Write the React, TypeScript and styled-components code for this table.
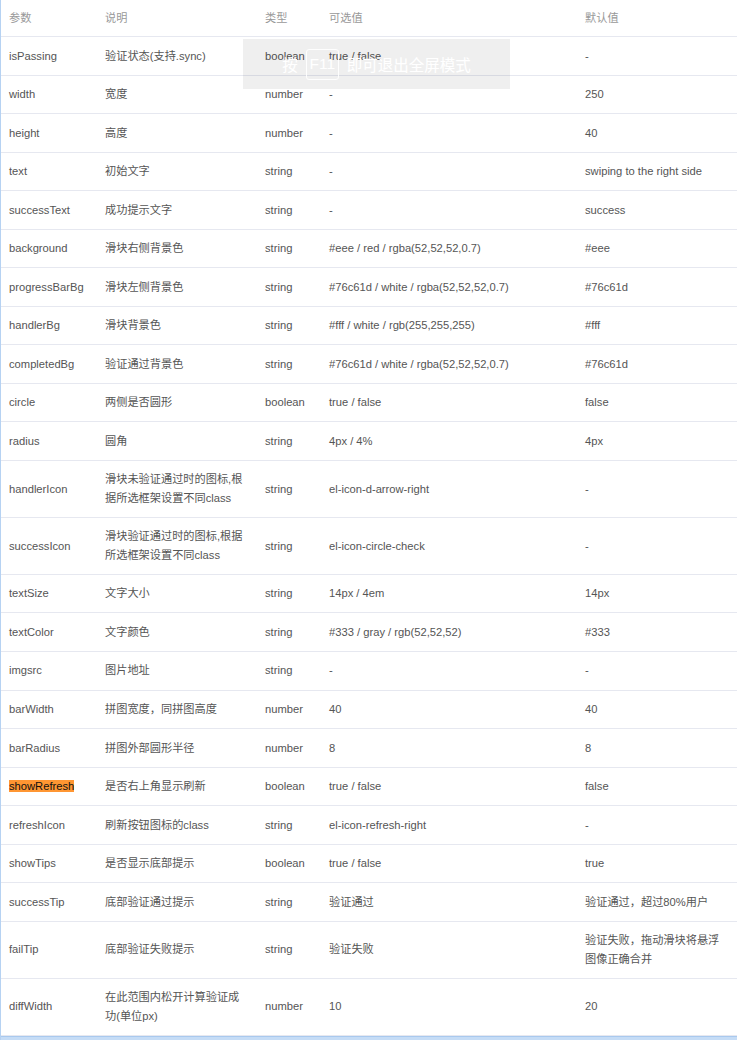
import React from "react";
import styled, { createGlobalStyle } from "styled-components";

const Global = createGlobalStyle`
  html, body { margin: 0; padding: 0; background: #fff; }
  body { font-family: "Liberation Sans", "Noto Sans CJK SC", Arial, sans-serif; }
`;

const Page = styled.div`
  position: relative;
  width: 737px;
  border-left: 1px solid #b6d2f2;
  box-sizing: border-box;
`;

const Table = styled.table`
  width: 736px;
  table-layout: fixed;
  border-collapse: collapse;
  font-size: 11.2px;
  color: #555;
`;

const HeadCell = styled.th`
  text-align: left;
  font-weight: normal;
  color: #999;
  line-height: 18.5px;
  padding: 8.75px 12px 8.75px 8px;
  border-bottom: 1px solid #e6e8f0;
  vertical-align: middle;
`;

const Cell = styled.td`
  line-height: 18.5px;
  padding: 9.52px 12px 9.52px 8px;
  border-bottom: 1px solid #e6e8f0;
  vertical-align: middle;
  word-break: break-all;
`;

const Mark = styled.span`
  background: #ff9632;
  color: #111;
`;

const Footer = styled.div`
  height: 8px;
  background: #c5dcf6;
  border-top: 1px solid #a9c9ee;
`;

const Overlay = styled.div`
  position: absolute;
  left: 242px;
  top: 39px;
  width: 267px;
  height: 50px;
  background: rgba(0, 0, 0, 0.063);
  display: flex;
  align-items: center;
  justify-content: center;
  gap: 8px;
  color: #fff;
  font-family: "Noto Sans CJK SC", "Liberation Sans", sans-serif;
  font-size: 15.5px;
  pointer-events: none;
`;

const KeyBox = styled.span`
  display: inline-flex;
  align-items: center;
  justify-content: center;
  width: 31px;
  height: 29px;
  border: 1px solid rgba(255, 255, 255, 0.9);
  border-radius: 3px;
  font-family: "Liberation Sans", sans-serif;
  font-size: 15.5px;
`;

type Row = [React.ReactNode, string, string, string, string];

const rows: Row[] = [
  ["isPassing", "验证状态(支持.sync)", "boolean", "true / false", "-"],
  ["width", "宽度", "number", "-", "250"],
  ["height", "高度", "number", "-", "40"],
  ["text", "初始文字", "string", "-", "swiping to the right side"],
  ["successText", "成功提示文字", "string", "-", "success"],
  ["background", "滑块右侧背景色", "string", "#eee / red / rgba(52,52,52,0.7)", "#eee"],
  ["progressBarBg", "滑块左侧背景色", "string", "#76c61d / white / rgba(52,52,52,0.7)", "#76c61d"],
  ["handlerBg", "滑块背景色", "string", "#fff / white / rgb(255,255,255)", "#fff"],
  ["completedBg", "验证通过背景色", "string", "#76c61d / white / rgba(52,52,52,0.7)", "#76c61d"],
  ["circle", "两侧是否圆形", "boolean", "true / false", "false"],
  ["radius", "圆角", "string", "4px / 4%", "4px"],
  ["handlerIcon", "滑块未验证通过时的图标,根据所选框架设置不同class", "string", "el-icon-d-arrow-right", "-"],
  ["successIcon", "滑块验证通过时的图标,根据所选框架设置不同class", "string", "el-icon-circle-check", "-"],
  ["textSize", "文字大小", "string", "14px / 4em", "14px"],
  ["textColor", "文字颜色", "string", "#333 / gray / rgb(52,52,52)", "#333"],
  ["imgsrc", "图片地址", "string", "-", "-"],
  ["barWidth", "拼图宽度，同拼图高度", "number", "40", "40"],
  ["barRadius", "拼图外部圆形半径", "number", "8", "8"],
  [<Mark>showRefresh</Mark>, "是否右上角显示刷新", "boolean", "true / false", "false"],
  ["refreshIcon", "刷新按钮图标的class", "string", "el-icon-refresh-right", "-"],
  ["showTips", "是否显示底部提示", "boolean", "true / false", "true"],
  ["successTip", "底部验证通过提示", "string", "验证通过", "验证通过，超过80%用户"],
  ["failTip", "底部验证失败提示", "string", "验证失败", "验证失败，拖动滑块将悬浮图像正确合并"],
  ["diffWidth", "在此范围内松开计算验证成功(单位px)", "number", "10", "20"],
];

export default function App() {
  return (
    <>
      <Global />
      <Page>
        <Table>
          <colgroup>
            <col style={{ width: 96 }} />
            <col style={{ width: 160 }} />
            <col style={{ width: 64 }} />
            <col style={{ width: 256 }} />
            <col style={{ width: 160 }} />
          </colgroup>
          <thead>
            <tr>
              <HeadCell>参数</HeadCell>
              <HeadCell>说明</HeadCell>
              <HeadCell>类型</HeadCell>
              <HeadCell>可选值</HeadCell>
              <HeadCell>默认值</HeadCell>
            </tr>
          </thead>
          <tbody>
            {rows.map((r, i) => (
              <tr key={i}>
                {r.map((c, j) => (
                  <Cell key={j}>{c}</Cell>
                ))}
              </tr>
            ))}
          </tbody>
        </Table>
        <Footer />
        <Overlay>
          <span>按</span>
          <KeyBox>F11</KeyBox>
          <span>即可退出全屏模式</span>
        </Overlay>
      </Page>
    </>
  );
}
